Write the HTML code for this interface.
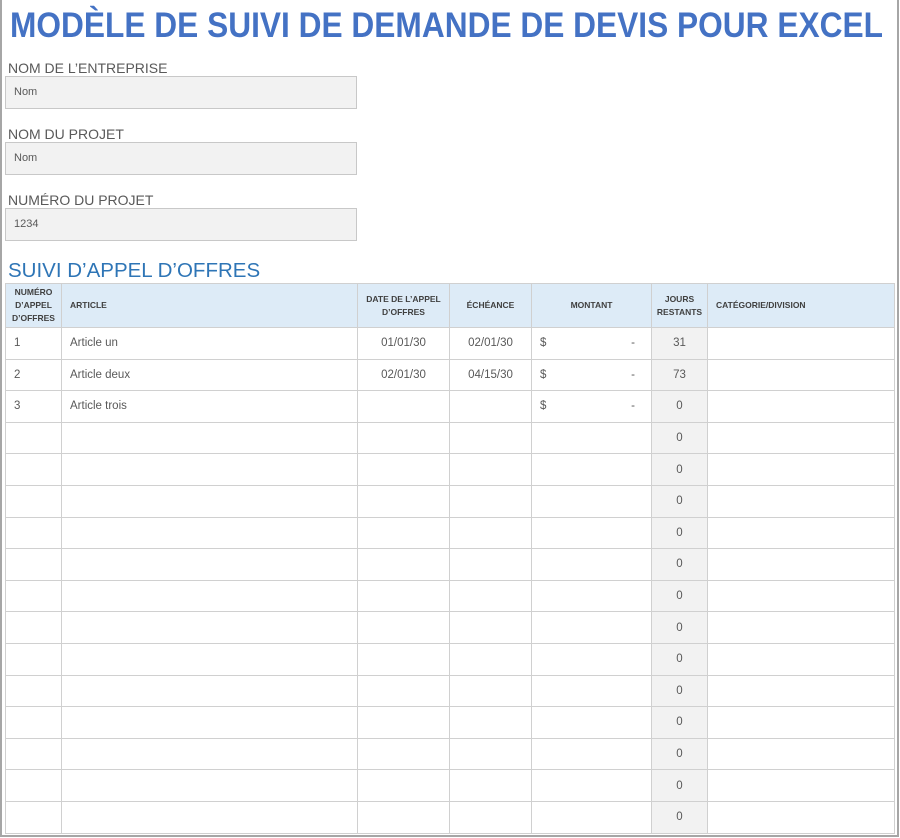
<!DOCTYPE html>
<html><head><meta charset="utf-8"><style>
*{box-sizing:border-box;margin:0;padding:0}
body{width:900px;height:838px;background:#fff;font-family:"Century Gothic","Liberation Sans",sans-serif;position:relative;overflow:hidden}
.frame{position:absolute;left:0;top:-2px;width:899px;height:839px;border:2px solid #a6a6a6;border-top:none}
h1{position:absolute;left:10px;top:6px;font-size:35px;font-weight:bold;color:#4472c4;white-space:nowrap;transform:scaleX(0.905);transform-origin:left}
.lbl{position:absolute;left:8px;font-size:14px;color:#595959}
.box{position:absolute;left:5px;width:352px;height:33px;background:#f2f2f2;border:1px solid #c8c8c8;font-size:11px;color:#595959;padding:9px 8px}
h2{position:absolute;left:8px;top:259px;font-size:20.5px;font-weight:normal;color:#2e75b6}
table{position:absolute;left:5px;top:283px;border-collapse:collapse;table-layout:fixed;width:890px}
td,th{border:1px solid #d0d0d0;font-size:11.5px;color:#595959;padding:0 8px;overflow:hidden;white-space:nowrap}
th{background:#ddebf7;height:44px;font-size:8.5px;font-weight:bold;color:#404040;white-space:normal;line-height:13px;text-align:center}
th.l{text-align:left}
tbody td{height:31.6px}
.c{text-align:center}
.g{background:#f2f2f2;text-align:center}
</style></head><body>
<div class="frame"></div>
<h1>MODÈLE DE SUIVI DE DEMANDE DE DEVIS POUR EXCEL</h1>
<div class="lbl" style="top:60px">NOM DE L’ENTREPRISE</div>
<div class="box" style="top:76px">Nom</div>
<div class="lbl" style="top:126px">NOM DU PROJET</div>
<div class="box" style="top:142px">Nom</div>
<div class="lbl" style="top:192px">NUMÉRO DU PROJET</div>
<div class="box" style="top:208px">1234</div>
<h2>SUIVI D’APPEL D’OFFRES</h2>
<table>
<colgroup><col style="width:56px"><col style="width:296px"><col style="width:92px"><col style="width:82px"><col style="width:120px"><col style="width:56px"><col></colgroup>
<thead><tr><th style="padding:0 2px">NUMÉRO D’APPEL D’OFFRES</th><th class="l">ARTICLE</th><th style="padding:0 2px">DATE DE L’APPEL<br>D’OFFRES</th><th>ÉCHÉANCE</th><th>MONTANT</th><th style="padding:0 2px">JOURS RESTANTS</th><th class="l">CATÉGORIE/DIVISION</th></tr></thead>
<tbody>
<tr><td>1</td><td>Article un</td><td class="c">01/01/30</td><td class="c">02/01/30</td><td>$<span style="float:right;margin-right:8px">-</span></td><td class="g">31</td><td></td></tr>
<tr><td>2</td><td>Article deux</td><td class="c">02/01/30</td><td class="c">04/15/30</td><td>$<span style="float:right;margin-right:8px">-</span></td><td class="g">73</td><td></td></tr>
<tr><td>3</td><td>Article trois</td><td></td><td></td><td>$<span style="float:right;margin-right:8px">-</span></td><td class="g">0</td><td></td></tr>
<tr><td></td><td></td><td></td><td></td><td></td><td class="g">0</td><td></td></tr>
<tr><td></td><td></td><td></td><td></td><td></td><td class="g">0</td><td></td></tr>
<tr><td></td><td></td><td></td><td></td><td></td><td class="g">0</td><td></td></tr>
<tr><td></td><td></td><td></td><td></td><td></td><td class="g">0</td><td></td></tr>
<tr><td></td><td></td><td></td><td></td><td></td><td class="g">0</td><td></td></tr>
<tr><td></td><td></td><td></td><td></td><td></td><td class="g">0</td><td></td></tr>
<tr><td></td><td></td><td></td><td></td><td></td><td class="g">0</td><td></td></tr>
<tr><td></td><td></td><td></td><td></td><td></td><td class="g">0</td><td></td></tr>
<tr><td></td><td></td><td></td><td></td><td></td><td class="g">0</td><td></td></tr>
<tr><td></td><td></td><td></td><td></td><td></td><td class="g">0</td><td></td></tr>
<tr><td></td><td></td><td></td><td></td><td></td><td class="g">0</td><td></td></tr>
<tr><td></td><td></td><td></td><td></td><td></td><td class="g">0</td><td></td></tr>
<tr><td></td><td></td><td></td><td></td><td></td><td class="g">0</td><td></td></tr>
</tbody></table>
</body></html>
